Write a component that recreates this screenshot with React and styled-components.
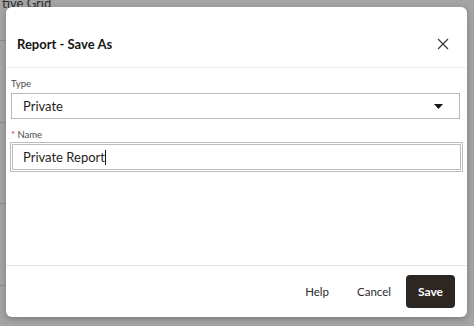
import styled, { createGlobalStyle } from 'styled-components';

const GlobalStyle = createGlobalStyle`
  html, body {
    margin: 0;
    padding: 0;
  }
  body {
    width: 474px;
    height: 326px;
    overflow: hidden;
    background: #a4a4a4;
    font-family: Lato, 'Noto Sans', sans-serif;
  }
`;

function CloseIcon() {
  return (
    <svg width="12" height="12" viewBox="0 0 12 12">
      <path d="M1 1 L11 11 M11 1 L1 11" stroke="#3a3a3a" strokeWidth="1.2" />
    </svg>
  );
}

function Caret() {
  return (
    <svg width="9" height="5" viewBox="0 0 9 5">
      <path d="M0 0 H9 L4.5 5 Z" fill="#161513" />
    </svg>
  );
}

export default function App() {
  return (
    <>
      <GlobalStyle />
      <Backdrop>
        <PageTitle>tive Grid</PageTitle>
        <GridLines>
          <span />
          <span />
          <span />
          <span />
        </GridLines>
        <Dialog>
          <Header>
            <Title>Report - Save As</Title>
            <CloseButton aria-label="Close">
              <CloseIcon />
            </CloseButton>
          </Header>

          <Body>
            <Field>
              <Label $gap={3}>Type</Label>
              <Select>
                <span>Private</span>
                <Caret />
              </Select>
            </Field>

            <Field>
              <Label $gap={1}>
                <Required>*</Required> Name
              </Label>
              <FocusRing>
                <Input>
                  Private Report<Cursor />
                </Input>
              </FocusRing>
            </Field>
          </Body>

          <Footer>
            <TextButton>Help</TextButton>
            <TextButton>Cancel</TextButton>
            <PrimaryButton>Save</PrimaryButton>
          </Footer>
        </Dialog>
      </Backdrop>
    </>
  );
}

const Backdrop = styled.div`
  position: relative;
  width: 474px;
  height: 326px;
  padding: 7px 7px 9px 6px;
  box-sizing: border-box;
  display: flex;
  flex-direction: column;
`;

const PageTitle = styled.div`
  position: absolute;
  top: -4px;
  left: 2px;
  font-size: 13px;
  line-height: 14px;
  color: #2e2e2e;
`;

const GridLines = styled.div`
  position: absolute;
  left: 0;
  top: 0;
  width: 6px;
  height: 100%;
  display: flex;
  flex-direction: column;
  justify-content: space-around;

  span {
    height: 1px;
    background: #8d8d8d;
  }
`;

const Dialog = styled.div`
  position: relative;
  flex: 1;
  display: flex;
  flex-direction: column;
  background: #fff;
  border-radius: 6px;
  box-shadow: 0 2px 6px rgba(0, 0, 0, 0.25);
  overflow: hidden;
`;

const Header = styled.div`
  height: 61px;
  box-sizing: border-box;
  display: flex;
  align-items: center;
  justify-content: space-between;
  padding: 14px 18px 0 11px;
  border-bottom: 1px solid #eeeeee;
`;

const Title = styled.h1`
  margin: 0;
  font-size: 13px;
  font-weight: 700;
  color: #161513;
`;

const CloseButton = styled.button`
  border: 0;
  background: none;
  padding: 0;
  display: flex;
`;

const Body = styled.div`
  flex: 1;
  display: flex;
  flex-direction: column;
  gap: 10px;
  padding: 10px 4px 0 5px;
`;

const Field = styled.div`
  display: flex;
  flex-direction: column;
`;

const Label = styled.label`
  font-size: 9.5px;
  color: #4a4a4a;
  line-height: 12px;
  margin-bottom: ${(p) => p.$gap}px;
`;

const Required = styled.span`
  color: #c74634;
`;

const Select = styled.div`
  height: 26px;
  box-sizing: border-box;
  margin-right: 3px;
  border: 1px solid #b9b9b9;
  display: flex;
  align-items: center;
  justify-content: space-between;
  padding: 0 16px 0 11px;
  font-size: 13px;
  color: #1f1e1c;
`;

const FocusRing = styled.div`
  margin-left: -1px;
  border: 1px solid #bdbdbd;
  padding: 1px;
`;

const Input = styled.div`
  height: 26px;
  box-sizing: border-box;
  border: 1px solid #bdbdbd;
  display: flex;
  align-items: center;
  padding-left: 10px;
  font-size: 13px;
  color: #1f1e1c;
`;

const Cursor = styled.span`
  display: inline-block;
  width: 1px;
  height: 15px;
  background: #161513;
`;

const Footer = styled.div`
  height: 52px;
  box-sizing: border-box;
  border-top: 1px solid #e6e6e6;
  display: flex;
  align-items: center;
  justify-content: flex-end;
  padding: 0 12px 0 0;
`;

const TextButton = styled.button`
  border: 0;
  background: none;
  font-family: inherit;
  font-size: 11.5px;
  color: #2b2b2b;
  padding: 8px 14px;
`;

const PrimaryButton = styled.button`
  border: 0;
  border-radius: 4px;
  background: #2d2724;
  color: #fff;
  font-family: inherit;
  font-size: 12px;
  font-weight: 700;
  width: 49px;
  height: 33px;
  margin-left: 1px;
`;
